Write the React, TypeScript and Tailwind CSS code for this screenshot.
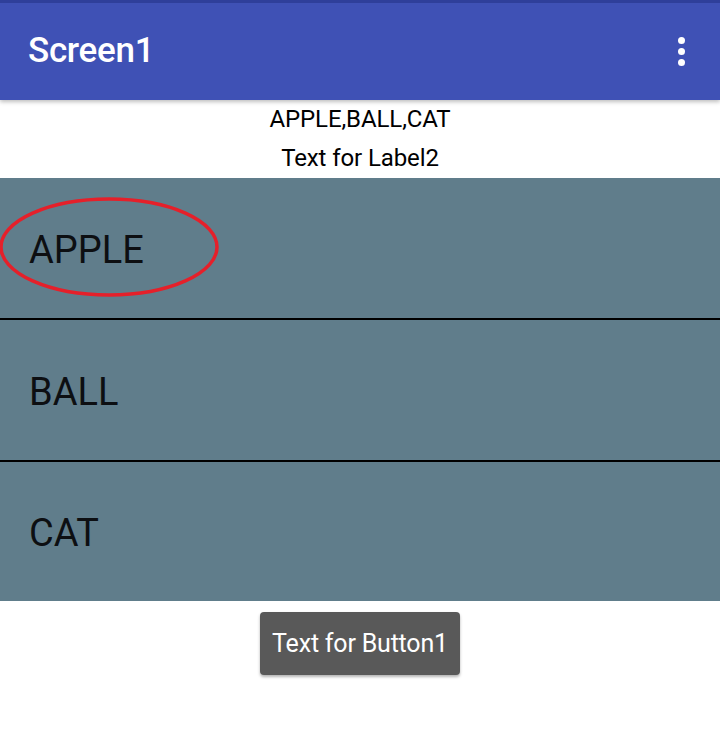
import React from 'react';

const items = ['APPLE', 'BALL', 'CAT'];

const App: React.FC = () => {
  return (
    <div className="w-[720px] h-[732px] bg-white flex flex-col font-['Roboto',sans-serif] overflow-hidden">
      <header className="relative z-10 h-[100px] bg-[#3f51b5] border-t-[3px] border-[#2f3f9a] shadow-[0_2px_4px_rgba(0,0,0,0.25)] flex items-center justify-between pl-[28px] pr-[35px]">
        <h1 className="text-white text-[35px] font-medium tracking-[-0.3px]">Screen1</h1>
        <div className="flex flex-col gap-[4px] items-center">
          <span className="w-[7px] h-[7px] rounded-full bg-white" />
          <span className="w-[7px] h-[7px] rounded-full bg-white" />
          <span className="w-[7px] h-[7px] rounded-full bg-white" />
        </div>
      </header>

      <div className="flex flex-col items-center text-black text-[24px] leading-[39px] tracking-[-0.1px]">
        <p>APPLE,BALL,CAT</p>
        <p>Text for Label2</p>
      </div>

      <ul className="h-[423px] bg-[#607d8b] flex flex-col">
        {items.map((item, i) => (
          <li
            key={item}
            className={`relative flex items-center pl-[29px] pt-[4px] text-[38px] text-[#0d0f12] ${
              i < items.length - 1 ? 'h-[142px] border-b-2 border-black' : 'flex-1'
            }`}
          >
            {item}
            {i === 0 && (
              <svg className="absolute left-0 top-[17px]" width="222" height="104" viewBox="0 0 222 104">
                <ellipse cx="109" cy="52" rx="108" ry="48" fill="none" stroke="#e5202a" strokeWidth="3.5" />
              </svg>
            )}
          </li>
        ))}
      </ul>

      <div className="flex justify-center pt-[11px]">
        <button className="w-[200px] h-[63px] bg-[#595959] rounded-[4px] shadow-[0_2px_3px_rgba(0,0,0,0.3)] text-white text-[25px] tracking-[-0.2px]">
          Text for Button1
        </button>
      </div>
    </div>
  );
};

export default App;
